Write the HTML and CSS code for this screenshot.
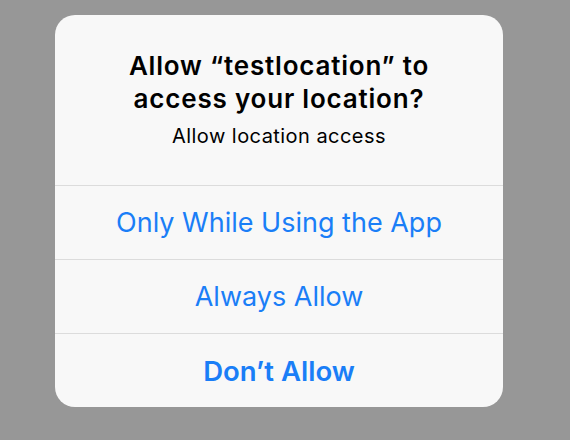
FILE: index.html
```html
<!DOCTYPE html>
<html>
<head>
<meta charset="utf-8">
<link rel="stylesheet" href="styles.css">
</head>
<body>
<div class="screen">
  <div class="alert">
    <div class="alert-head">
      <div class="alert-title">Allow “testlocation” to<br>access your location?</div>
      <div class="alert-msg">Allow location access</div>
    </div>
    <div class="alert-btn">Only While Using the App</div>
    <div class="alert-btn">Always Allow</div>
    <div class="alert-btn alert-btn-bold">Don’t Allow</div>
  </div>
</div>
</body>
</html>
```
FILE: styles.css
```css
html, body {
  margin: 0;
  padding: 0;
  background: #979797;
}
.screen {
  width: 570px;
  height: 440px;
  padding: 15px 0 0 55px;
  box-sizing: border-box;
  font-family: "Inter", "Noto Sans", sans-serif;
}
.alert {
  width: 448px;
  background: #f8f8f8;
  border-radius: 20px;
  overflow: hidden;
}
.alert-head {
  height: 170px;
  box-sizing: border-box;
  padding-top: 34px;
  text-align: center;
  color: #000;
}
.alert-title {
  font-size: 26px;
  font-weight: 600;
  line-height: 33px;
  letter-spacing: 0.8px;
}
.alert-msg {
  margin-top: 9px;
  font-size: 20px;
  line-height: 24px;
  letter-spacing: 0.45px;
}
.alert-btn {
  height: 73px;
  border-top: 1px solid #dcdcdc;
  display: flex;
  align-items: center;
  justify-content: center;
  color: #1a7ef7;
  font-size: 27px;
}
.alert-btn-bold {
  font-weight: 600;
  font-size: 27.5px;
}
```
